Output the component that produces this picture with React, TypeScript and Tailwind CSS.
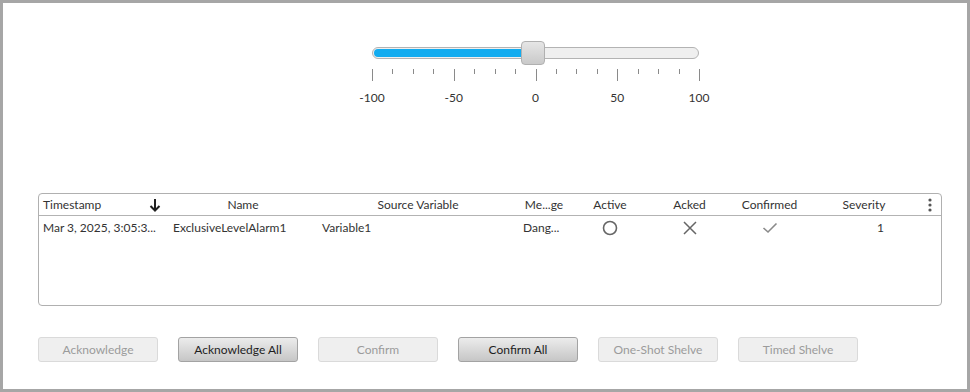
import React from "react";

const majors = [0, 4, 8, 12, 16];

function Scale() {
  const w = 327;
  const ticks = Array.from({ length: 17 }, (_, i) => i);
  return (
    <svg width={w + 2} height={12} className="block">
      {ticks.map((i) => {
        const x = Math.round((i * w) / 16) + 0.5;
        const major = majors.includes(i);
        return (
          <line
            key={i}
            x1={x}
            x2={x}
            y1={0}
            y2={major ? 12 : 5}
            stroke="#8a8a8a"
            strokeWidth={1}
          />
        );
      })}
    </svg>
  );
}

function SortArrow() {
  return (
    <svg width="12" height="14" viewBox="0 0 12 14">
      <path d="M6 1 V12.5" stroke="#222" strokeWidth="2" fill="none" />
      <path d="M1.5 8 L6 12.5 L10.5 8" stroke="#222" strokeWidth="2" fill="none" />
    </svg>
  );
}

function Kebab() {
  return (
    <svg width="4" height="14" viewBox="0 0 4 14">
      <circle cx="2" cy="2" r="1.6" fill="#555" />
      <circle cx="2" cy="7" r="1.6" fill="#555" />
      <circle cx="2" cy="12" r="1.6" fill="#555" />
    </svg>
  );
}

function CircleIcon() {
  return (
    <svg width="16" height="16" viewBox="0 0 16 16">
      <circle cx="8" cy="8" r="6.5" stroke="#666" strokeWidth="1.6" fill="none" />
    </svg>
  );
}

function XIcon() {
  return (
    <svg width="16" height="16" viewBox="0 0 16 16">
      <path d="M2 2 L14 14 M14 2 L2 14" stroke="#666" strokeWidth="1.5" fill="none" />
    </svg>
  );
}

function CheckIcon() {
  return (
    <svg width="16" height="14" viewBox="0 0 16 14">
      <path d="M1.5 7 L6 11 L14.5 2.5" stroke="#8a8a8a" strokeWidth="1.6" fill="none" />
    </svg>
  );
}

function Btn({ label, enabled }: { label: string; enabled?: boolean }) {
  return (
    <div
      className={
        enabled
          ? "w-[120px] h-[25px] rounded-[3px] border border-[#a3a3a3] bg-gradient-to-b from-[#ececec] to-[#c6c6c6] text-[#1e1e1e] flex items-center justify-center text-[12px]"
          : "w-[120px] h-[25px] rounded-[3px] border border-[#dadada] bg-[#efefef] text-[#9b9b9b] flex items-center justify-center text-[12px]"
      }
    >
      {label}
    </div>
  );
}

export default function App() {
  return (
    <div
      className="w-[970px] h-[392px] border-[3px] border-[#a6a6a6] bg-white text-[#333] overflow-hidden"
      style={{ fontFamily: "Lato, 'Open Sans', sans-serif" }}
    >
      {/* Slider */}
      <div className="ml-[369px] mt-[38px] w-[340px]">
        <div className="relative h-[24px] w-[327px] flex items-center">
          <div className="relative h-[12px] w-[327px] rounded-full border border-[#b3b3b3] bg-[#efefef]">
            <div className="absolute left-[1px] top-[1px] h-[8px] w-[150px] rounded-l-full bg-[#12acf0]" />
          </div>
          <div className="absolute left-[149px] top-0 h-[24px] w-[24px] rounded-[4px] border border-[#b0b0b0] bg-gradient-to-b from-[#e6e6e6] to-[#c9c9c9]" />
        </div>
        <div className="mt-[4px]">
          <Scale />
        </div>
        <div className="-ml-[20px] mt-[9px] w-[367px] flex justify-between text-[12px] leading-[16px] text-[#333]">
          {["-100", "-50", "0", "50", "100"].map((t) => (
            <div key={t} className="w-[40px] text-center">
              {t}
            </div>
          ))}
        </div>
      </div>

      {/* Table */}
      <div className="ml-[35px] mt-[87px] w-[904px] h-[113px] rounded-[4px] border border-[#b0b0b0] text-[12px]">
        <div className="flex h-[22px] items-center border-b border-[#b3b3b3] text-[#333]">
          <div className="w-[129px] pl-[4px] pr-[7px] flex items-center justify-between">
            <span>Timestamp</span>
            <SortArrow />
          </div>
          <div className="w-[150px] text-center">Name</div>
          <div className="w-[200px] text-center">Source Variable</div>
          <div className="w-[52px] text-center">Me...ge</div>
          <div className="w-[80px] text-center">Active</div>
          <div className="w-[79px] text-center">Acked</div>
          <div className="w-[81px] text-center">Confirmed</div>
          <div className="w-[108px] text-center">Severity</div>
          <div className="flex-1 flex justify-center">
            <Kebab />
          </div>
        </div>
        <div className="flex h-[24px] items-center text-[#333]">
          <div className="w-[129px] pl-[4px] whitespace-nowrap">Mar 3, 2025, 3:05:3...</div>
          <div className="w-[150px] pl-[5px]">ExclusiveLevelAlarm1</div>
          <div className="w-[200px] pl-[4px]">Variable1</div>
          <div className="w-[52px] pl-[5px]">Dang...</div>
          <div className="w-[80px] flex justify-center">
            <CircleIcon />
          </div>
          <div className="w-[79px] flex justify-center">
            <XIcon />
          </div>
          <div className="w-[81px] flex justify-center">
            <CheckIcon />
          </div>
          <div className="w-[108px] text-right pr-[34px]">1</div>
        </div>
      </div>

      {/* Buttons */}
      <div className="ml-[35px] mt-[31px] flex gap-[20px]">
        <Btn label="Acknowledge" />
        <Btn label="Acknowledge All" enabled />
        <Btn label="Confirm" />
        <Btn label="Confirm All" enabled />
        <Btn label="One-Shot Shelve" />
        <Btn label="Timed Shelve" />
      </div>
    </div>
  );
}
